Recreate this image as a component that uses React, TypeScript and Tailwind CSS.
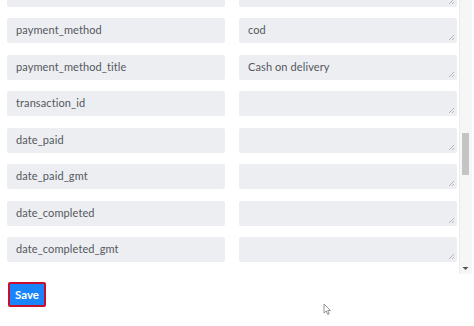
import React from "react";

const rows: [string, string][] = [
  ["", ""],
  ["payment_method", "cod"],
  ["payment_method_title", "Cash on delivery"],
  ["transaction_id", ""],
  ["date_paid", ""],
  ["date_paid_gmt", ""],
  ["date_completed", ""],
  ["date_completed_gmt", ""],
  ["", ""],
];

function Handle() {
  return (
    <svg className="absolute right-[2px] bottom-[2px]" width="7" height="7" viewBox="0 0 7 7">
      <path d="M6 1 L1 6 M6 4 L4 6" stroke="#b5b7bc" strokeWidth="1" />
    </svg>
  );
}

export default function App() {
  return (
    <div className="w-[474px] h-[326px] bg-white relative overflow-hidden" style={{ fontFamily: "Lato, 'Open Sans', sans-serif" }}>
      <div className="h-[274px] overflow-hidden flex">
        <div className="w-[459px] flex flex-col gap-[11.5px] mt-[-18.5px] pl-[7px] pr-[2px]">
          {rows.map(([l, r], i) => (
            <div key={i} className="grid grid-cols-[218px_218px] gap-[14px] shrink-0">
              <div className="h-[25px] bg-[#eceef2] rounded-[2px] flex items-center pl-[9px] text-[11px] text-[#55585d] tracking-[0.1px]">{l}</div>
              <div className="h-[25px] bg-[#eceef2] rounded-[2px] flex items-center pl-[9px] text-[11px] text-[#55585d] tracking-[0.1px] relative">
                {r}
                <Handle />
              </div>
            </div>
          ))}
        </div>
        <div className="w-[13px] h-[274px] bg-[#f6f6f6] relative border-l border-[#ececec]">
          <div className="absolute left-[2px] top-[133px] w-[7px] h-[42px] bg-[#c4c4c4]" />
          <svg className="absolute left-[2px] top-[266px]" width="7" height="5" viewBox="0 0 7 5">
            <path d="M0.5 1 L6.5 1 L3.5 4 Z" fill="#555" />
          </svg>
        </div>
      </div>
      <div className="pl-[8px] pt-[8px]">
        <button className="w-[38px] h-[25px] bg-[#1a85fb] border-2 border-[#c8102e] rounded-[2px] text-white text-[11.5px] font-bold flex items-center justify-center">
          Save
        </button>
      </div>
      <svg className="absolute left-[323px] top-[303px]" width="9" height="13" viewBox="0 0 9 13">
        <path d="M1 1 L1 10 L3.2 8 L4.8 11.5 L6.2 10.9 L4.7 7.5 L7.5 7.5 Z" fill="#fff" stroke="#888" strokeWidth="0.9" />
      </svg>
    </div>
  );
}
